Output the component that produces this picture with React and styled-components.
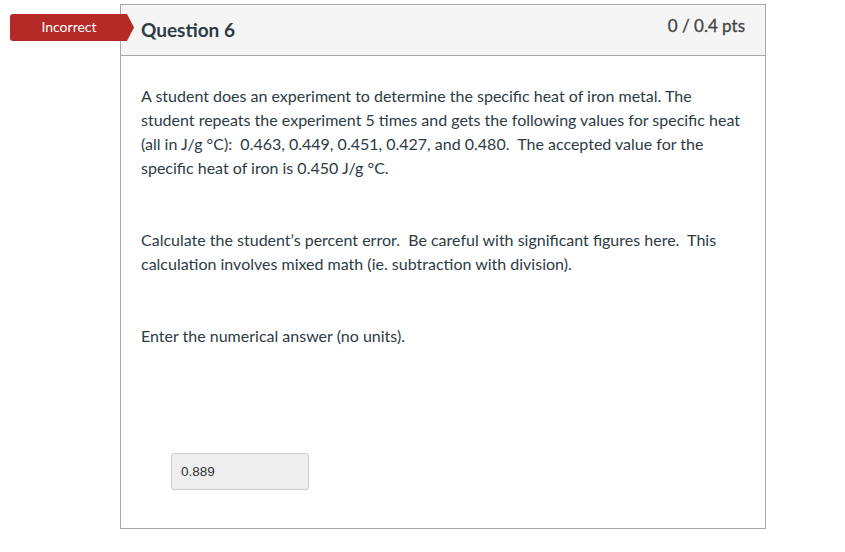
import React from "react";
import styled, { createGlobalStyle } from "styled-components";

const GlobalStyle = createGlobalStyle`
  body {
    margin: 0;
    background: #fff;
    font-family: Lato, "Noto Sans", sans-serif;
  }
`;

const Page = styled.div`
  position: relative;
  width: 845px;
  height: 552px;
  padding: 4px 0 0 120px;
  box-sizing: border-box;
`;

const Badge = styled.div`
  position: absolute;
  left: 10px;
  top: 14px;
  width: 124px;
  height: 27px;
  padding: 0 6px 3px 0;
  box-sizing: border-box;
  background: #b52a27;
  color: #fff;
  font-size: 14px;
  display: flex;
  align-items: center;
  justify-content: center;
  border-radius: 3px 0 0 3px;
  clip-path: polygon(0 0, 117px 0, 100% 50%, 117px 100%, 0 100%);
`;

const Card = styled.div`
  width: 646px;
  border: 1px solid #a8a8a8;
  box-sizing: border-box;
  color: #2d3b45;
`;

const Header = styled.div`
  height: 51px;
  background: #f5f5f5;
  border-bottom: 1px solid #a8a8a8;
  display: flex;
  align-items: center;
  justify-content: space-between;
  padding: 0 20px 0 20px;
  box-sizing: border-box;
`;

const Title = styled.h2`
  margin: 0 0 2px;
  font-size: 19px;
  font-weight: 700;
  color: #2d3b45;
`;

const Points = styled.span`
  font-size: 17px;
  font-weight: 400;
  color: #444;
  margin-bottom: 10px;
  -webkit-text-stroke: 0.3px #444;
`;

const Body = styled.div`
  padding: 28px 20px 38px 20px;
`;

const Para = styled.p`
  margin: 0 0 ${(p) => p.$gap || 48}px;
  font-size: 16px;
  line-height: 24px;
  color: #2d3b45;
`;

const Answer = styled.div`
  margin-left: 30px;
  width: 138px;
  height: 37px;
  box-sizing: border-box;
  background: #eee;
  border: 1px solid #ccc;
  border-radius: 3px;
  padding: 0 9px;
  display: flex;
  align-items: center;
  font-family: "Liberation Sans", Arial, sans-serif;
  font-size: 13.5px;
  color: #333;
`;

export default function App() {
  return (
    <>
      <GlobalStyle />
      <Page>
        <Badge>Incorrect</Badge>
        <Card>
          <Header>
            <Title>Question 6</Title>
            <Points>0 / 0.4 pts</Points>
          </Header>
          <Body>
            <Para>
              A student does an experiment to determine the specific heat of iron metal. The
              student repeats the experiment 5 times and gets the following values for specific
              heat (all in J/g °C):&nbsp; 0.463, 0.449, 0.451, 0.427, and 0.480.&nbsp; The accepted
              value for the specific heat of iron is 0.450 J/g °C.
            </Para>
            <Para>
              Calculate the student’s percent error.&nbsp; Be careful with significant figures
              here.&nbsp; This calculation involves mixed math (ie. subtraction with division).
            </Para>
            <Para $gap={105}>Enter the numerical answer (no units).</Para>
            <Answer>0.889</Answer>
          </Body>
        </Card>
      </Page>
    </>
  );
}
